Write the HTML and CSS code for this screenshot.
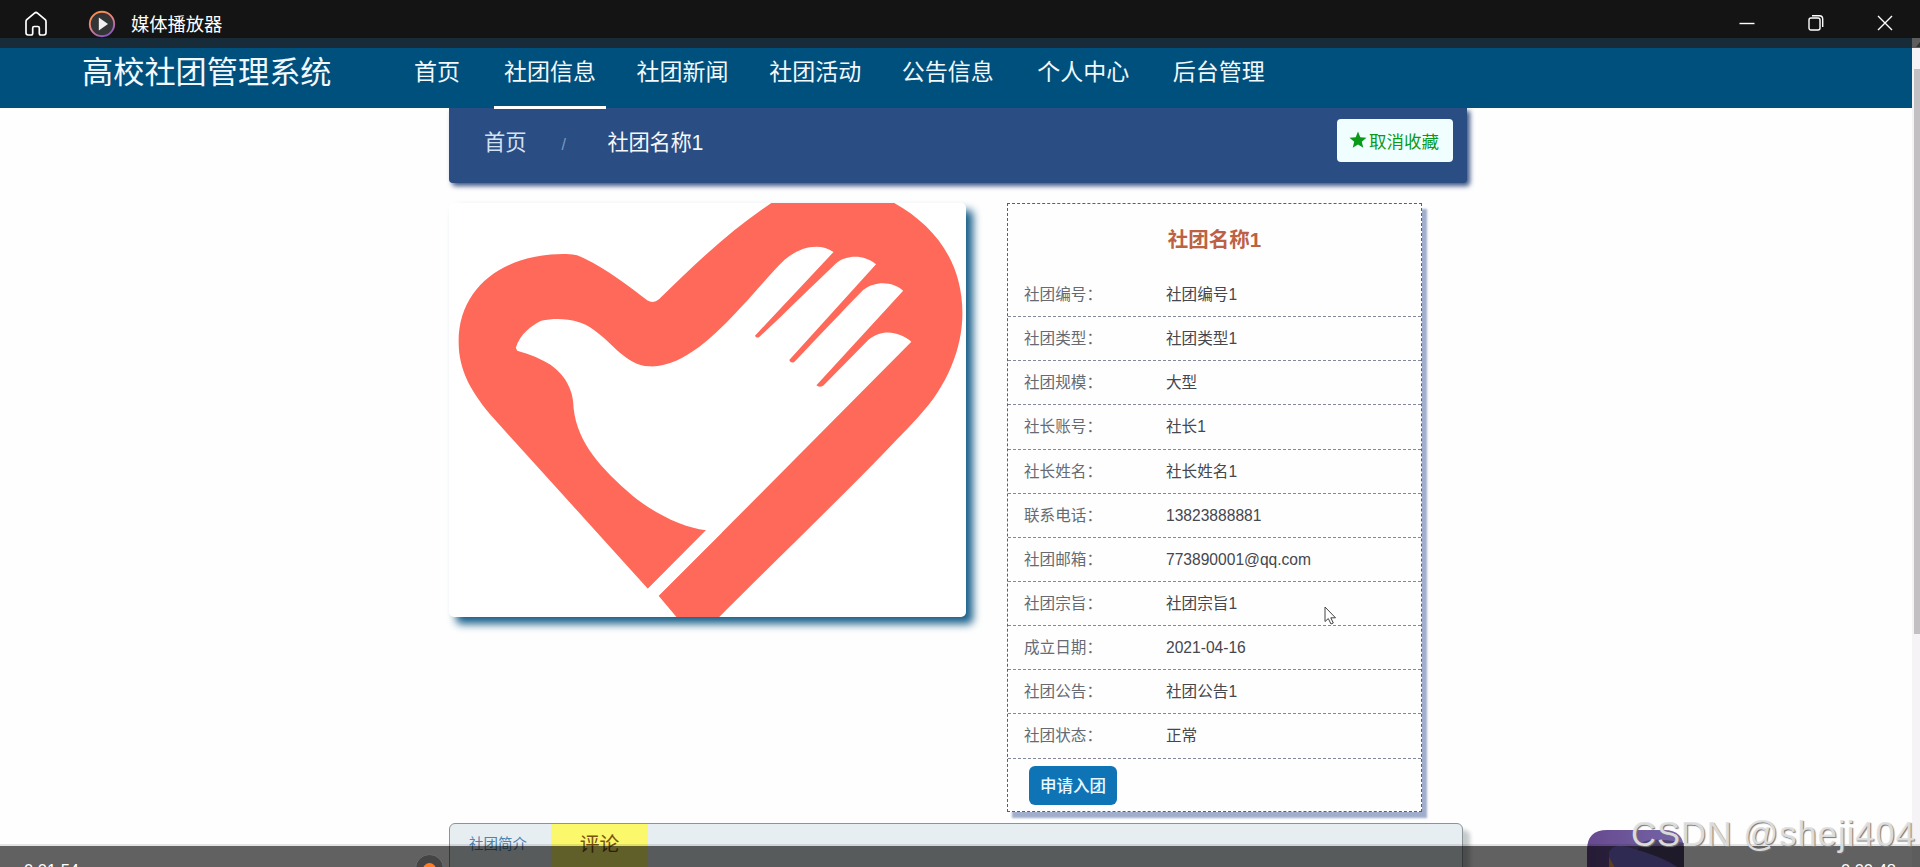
FILE: index.html
```html
<!DOCTYPE html>
<html lang="zh-CN">
<head>
    <meta charset="UTF-8">
    <meta name="viewport" content="width=device-width, initial-scale=1.0">
    <title>高校社团管理系统</title>
    <link rel="stylesheet" href="styles.css">
</head>
<body>

    <!-- player title bar -->
    <div class="titlebar">
        <svg class="home" width="24" height="26" viewBox="0 0 24 26">
            <path d="M2 10.5 Q2 9.5 2.8 8.7 L10.5 2.1 Q12 .9 13.5 2.1 L21.2 8.7 Q22 9.5 22 10.5 V21.8 Q22 24 19.8 24 H17 Q15.3 24 15.3 22.3 V17 Q15.3 15.5 13.8 15.5 H10.2 Q8.7 15.5 8.7 17 V22.3 Q8.7 24 7 24 H4.2 Q2 24 2 21.8 Z" fill="none" stroke="#fff" stroke-width="1.7"/>
        </svg>
        <svg class="app-icon" width="28" height="28" viewBox="0 0 28 28">
            <defs>
                <linearGradient id="ring" x1="0.2" y1="0" x2="0.7" y2="1">
                    <stop offset="0" stop-color="#ff9040"/>
                    <stop offset="0.5" stop-color="#e0828c"/>
                    <stop offset="1" stop-color="#8a55c4"/>
                </linearGradient>
            </defs>
            <circle cx="14" cy="14" r="12.2" fill="#333436" stroke="url(#ring)" stroke-width="1.9"/>
            <path d="M10.8 7.6 L20 14 L10.8 20.6 Z" fill="#f0f0f0"/>
        </svg>
        <span class="app-name">媒体播放器</span>
        <div class="window-buttons">
            <svg width="16" height="18" viewBox="0 0 16 18"><path d="M.5 9.5H15.5" stroke="#fff" stroke-width="1.4"/></svg>
            <svg width="16" height="18" viewBox="0 0 16 18"><rect x="1" y="4" width="11" height="12" rx="2" fill="none" stroke="#fff" stroke-width="1.4"/><path d="M4 1.7H11.5Q14.7 1.7 14.7 5V13" fill="none" stroke="#fff" stroke-width="1.4"/></svg>
            <svg width="16" height="18" viewBox="0 0 16 18"><path d="M1 2L15 16M15 2L1 16" stroke="#fff" stroke-width="1.4"/></svg>
        </div>
    </div>
    <div class="strip"><div class="strip-end"><i></i></div></div>

    <div class="viewport">
        <div class="page">
            <div class="navbar">
                <div class="brand">高校社团管理系统</div>
                <a class="nav-home">首页</a>
                <a class="active">社团信息</a>
                <a>社团新闻</a>
                <a>社团活动</a>
                <a>公告信息</a>
                <a class="wide">个人中心</a>
                <a class="wide">后台管理</a>
            </div>

            <div class="container">
                <div class="breadcrumb">
                    <span class="crumb">首页</span>
                    <span class="slash">/</span>
                    <span class="current">社团名称1</span>
                    <button class="collect">
                        <svg width="18" height="18" viewBox="0 0 18 18"><path d="M9 .5L11.3 6.3L17.5 6.7L12.8 10.7L14.3 16.8L9 13.5L3.7 16.8L5.2 10.7L.5 6.7L6.7 6.3Z" fill="#0a9a1a"/></svg>
                        <span>取消收藏</span>
                    </button>
                </div>

                <div class="detail">
                    <div class="cover">
                        <svg width="517" height="414" viewBox="25 39 1448 1242" preserveAspectRatio="none">
                            <!-- heart -->
                            <path fill="#ff6959" d="M582 1196 L150 685 C90 610 52 545 52 455 C52 290 180 192 345 192 Q380 190 403 205 C470 240 530 290 580 331 Q598 342 613 328 C720 215 820 115 928 39 H1272 C1390 110 1463 220 1463 370 C1463 475 1420 590 1340 680 C1170 875 960 1090 782 1281 H662 L612 1217 L790 1027 L745 1021 Z"/>
                            <!-- hand -->
                            <path fill="#fff" d="M212 473 C225 430 255 408 283 392 C340 380 395 390 430 419 C485 460 520 525 585 529 C680 535 775 430 840 355 C885 305 925 250 965 209 C1010 168 1065 158 1102 186 L882 437 Q886 446 894 441 C965 370 1040 290 1108 221 C1140 192 1190 195 1221 223 L978 510 Q982 521 992 516 C1060 440 1130 360 1185 300 C1220 270 1270 275 1297 302 L1054 586 Q1062 594 1073 587 L1200 449 C1240 415 1285 425 1320 455 L790 1027 L612 1217 L582 1196 L745 1021 C680 1013 600 970 540 918 C450 835 385 760 374 655 C374 590 340 540 292 514 C265 497 240 490 216 482 Z"/>
                        </svg>
                    </div>

                    <div class="info">
                        <h3>社团名称1</h3>
                        <div class="row"><span>社团编号：</span><b>社团编号1</b></div>
                        <div class="row"><span>社团类型：</span><b>社团类型1</b></div>
                        <div class="row"><span>社团规模：</span><b>大型</b></div>
                        <div class="row"><span>社长账号：</span><b>社长1</b></div>
                        <div class="row"><span>社长姓名：</span><b>社长姓名1</b></div>
                        <div class="row"><span>联系电话：</span><b>13823888881</b></div>
                        <div class="row"><span>社团邮箱：</span><b>773890001@qq.com</b></div>
                        <div class="row"><span>社团宗旨：</span><b>社团宗旨1</b></div>
                        <div class="row"><span>成立日期：</span><b>2021-04-16</b></div>
                        <div class="row"><span>社团公告：</span><b>社团公告1</b></div>
                        <div class="row"><span>社团状态：</span><b>正常</b></div>
                        <button class="apply">申请入团</button>
                    </div>
                </div>

                <div class="tabs">
                    <a class="tab">社团简介</a>
                    <a class="tab comment">评论</a>
                </div>
            </div>
        </div>
        <div class="scrollbar"><div class="thumb"></div></div>
    </div>

    <svg class="cursor" width="14" height="20" viewBox="0 0 14 20"><path d="M1 1V15.5L4.3 12.6L7 18L9.3 17L6.8 11.8H11.5Z" fill="#fff" stroke="#444" stroke-width="1"/></svg>

    <!-- floating desktop assistant icon -->
    <svg class="floating" width="97" height="38" viewBox="0 0 97 38">
        <defs>
            <linearGradient id="tile" x1="0" y1="0" x2="1" y2="0">
                <stop offset="0" stop-color="#67498f"/>
                <stop offset="1" stop-color="#7566a8"/>
            </linearGradient>
        </defs>
        <path d="M0 38V20Q0 0 20 0H77Q97 0 97 20V38Z" fill="url(#tile)"/>
        <path d="M56 12Q68 7 97 13V38H92Q76 26 50 21Z" fill="#51446c"/>
        <path d="M22 38V22Q28 12 44 18Q74 26 90 38Z" fill="#7a70d8"/>
        <path d="M22 38V27L28 38Z" fill="#f0a050"/>
    </svg>

    <!-- player controls -->
    <div class="controls">
        <span class="time">0:01:54</span>
        <span class="time">0:00:48</span>
        <div class="knob"><i></i></div>
    </div>

    <div class="watermark">CSDN @sheji404</div>

</body>
</html>
```

FILE: styles.css
```css
* {
    box-sizing: border-box;
}

body {
    margin: 0;
    width: 1920px;
    height: 867px;
    overflow: hidden;
    position: relative;
    background: #fff;
    font-family: "Liberation Sans", "Noto Sans CJK SC", sans-serif;
}

button {
    border: none;
    padding: 0;
    font-family: inherit;
}

/* title bar */
.titlebar {
    height: 38px;
    background: #141414;
    display: flex;
    align-items: flex-start;
    padding: 10px 27px 0 24px;
    color: #fff;
}

.home {
    margin-top: 1px;
}

.app-icon {
    margin-left: 40px;
}

.app-name {
    margin-left: 15px;
    font-size: 18.3px;
    line-height: 30px;
}

.window-buttons {
    display: flex;
    gap: 53px;
    margin: 4px 0 0 auto;
}

.strip {
    height: 10px;
    background: #172b39;
    display: flex;
    justify-content: flex-end;
}

.strip-end {
    width: 8px;
    background: #5d5d5d;
    overflow: hidden;
}

.strip-end i {
    display: block;
    margin: 4px 0 0 4px;
    border-left: 4px solid transparent;
    border-right: 4px solid transparent;
    border-bottom: 5px solid #333;
}

.viewport {
    display: flex;
    height: 819px;
}

.page {
    width: 1912px;
    background: #fefefe;
}

.scrollbar {
    width: 8px;
    padding: 21px 0 0 2px;
    background: #f5f3f6;
}

.thumb {
    height: 565px;
    background: #c2c0c2;
}

/* navigation */
.navbar {
    height: 60px;
    background: #00507d;
    display: flex;
    padding-left: 82px;
    color: #f2f8fc;
    position: relative;
    z-index: 1;
}

.brand {
    width: 322px;
    font-size: 31.2px;
    line-height: 49px;
}

.navbar a {
    height: 61px;
    padding: 0 10px;
    margin-right: 20.6px;
    font-size: 23px;
    line-height: 49px;
}

.navbar .nav-home {
    margin-right: 24px;
}

.navbar .wide {
    margin-left: 2.9px;
}

.navbar .active {
    border-bottom: 3px solid #fff;
}

/* content */
.container {
    width: 1018px;
    margin-left: 449px;
}

.breadcrumb {
    height: 75px;
    background: #2a4d83;
    border-radius: 0 0 4px 4px;
    box-shadow: 3px 3px 5px #3d5584;
    display: flex;
    padding: 0 14px 0 35px;
    font-size: 21.3px;
    line-height: 70px;
    color: #f4f7fb;
}

.crumb {
    color: #d3e2f2;
}

.slash {
    width: 81px;
    padding-left: 35px;
    font-size: 16px;
    line-height: 74px;
    color: #7e99bd;
}

.current {
    letter-spacing: -0.3px;
}

.collect {
    width: 116px;
    height: 43px;
    margin: 11px 0 0 auto;
    background: #f1feff;
    border-radius: 4px;
    display: flex;
    align-items: center;
    padding: 0 0 1px 12px;
    gap: 2px;
    font-size: 17.5px;
    color: #0a9a1a;
}

.detail {
    display: flex;
    align-items: flex-start;
    padding-top: 20px;
    height: 640px;
}

.cover {
    width: 517px;
    height: 414px;
    background: #fff;
    border-radius: 5px;
    overflow: hidden;
    box-shadow: 7px 7px 8px #1a608b;
}

.cover svg {
    display: block;
}

.info {
    width: 415px;
    height: 609px;
    margin-left: 41px;
    background: #fefefe;
    border: 1px dashed #5b5e70;
    box-shadow: 5px 6px 2px #a0aecb;
}

.info h3 {
    margin: 0;
    height: 69px;
    text-align: center;
    font-size: 20.5px;
    line-height: 72px;
    color: #bd6144;
}

.row {
    height: 44.15px;
    display: flex;
    border-bottom: 1px dashed #85879a;
    padding-left: 16px;
    font-size: 15.6px;
    line-height: 44px;
}

.row span {
    width: 142px;
    color: #666b73;
}

.row b {
    font-weight: normal;
    color: #44474e;
}

.apply {
    display: block;
    width: 88px;
    height: 39px;
    margin: 7px 0 0 21px;
    background: #0f74b5;
    border-radius: 6px;
    color: #e8f8ff;
    font-size: 16.5px;
    font-weight: 500;
}

.tabs {
    width: 1014px;
    height: 70px;
    display: flex;
    background: #e7eef2;
    border: 1px solid #8d9498;
    border-radius: 6px;
    box-shadow: 7px 7px 4px #c5caca;
}

.tab {
    width: 101px;
    padding-left: 19px;
    font-size: 14.5px;
    line-height: 40px;
    color: #4a84b0;
}

.comment {
    width: 97px;
    height: 56px;
    padding: 0;
    text-align: center;
    background: #fbf86c;
    font-size: 19.8px;
    line-height: 41px;
    color: #7a5210;
}

.cursor {
    position: absolute;
    left: 1324px;
    top: 606px;
}

.floating {
    position: absolute;
    left: 1587px;
    top: 830px;
}

/* player controls over the page */
.controls {
    position: absolute;
    left: 0;
    top: 844px;
    width: 1920px;
    height: 23px;
    overflow: hidden;
    display: flex;
    justify-content: space-between;
    padding: 14px 24px 0;
    border-top: 2px solid rgba(0, 0, 0, 0.1);
    background: rgba(0, 0, 0, 0.62);
    background-clip: padding-box;
    color: #fff;
}

.time {
    font-size: 16.5px;
    line-height: 20px;
}

.knob {
    position: absolute;
    left: 415px;
    top: 8px;
    width: 29px;
    height: 29px;
    border-radius: 50%;
    background: #454545;
    border: 1px solid #6c6c6c;
    padding: 8px 7px;
}

.knob i {
    display: block;
    width: 13px;
    height: 13px;
    border-radius: 50%;
    background: #ff7d26;
}

.watermark {
    position: absolute;
    left: 1631px;
    top: 811px;
    font-family: "Liberation Sans", sans-serif;
    font-size: 34.5px;
    letter-spacing: 1px;
    line-height: 46px;
    white-space: nowrap;
    color: rgba(225, 225, 225, 0.95);
    text-shadow: 1px 1px 1px #777;
}
```
